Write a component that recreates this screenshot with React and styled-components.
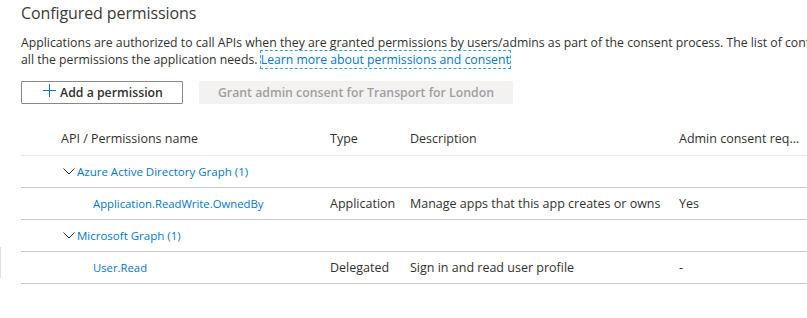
import React from 'react';
import styled, { createGlobalStyle } from 'styled-components';

const GlobalStyle = createGlobalStyle`
  html, body {
    margin: 0;
    padding: 0;
    background: #ffffff;
    overflow: hidden;
  }
  body {
    font-family: "Segoe UI", "Open Sans", "Noto Sans", sans-serif;
    color: #323130;
    font-size: 12.5px;
  }
`;

const Page = styled.div`
  width: 1200px;
  padding: 1px 0 0 21px;
  position: relative;
`;

const EdgeMark = styled.div`
  position: absolute;
  left: 0;
  top: 247px;
  width: 1px;
  height: 31px;
  background: #e1dfdd;
`;

const Title = styled.h2`
  margin: 0;
  font-size: 16px;
  font-weight: 400;
  letter-spacing: -0.1px;
  line-height: 24px;
  color: #3b3a39;
`;

const Intro = styled.p`
  margin: 9px 0 0;
  line-height: 17px;
  font-size: 12.25px;
  white-space: nowrap;
`;

const LearnLink = styled.a`
  color: #0078d4;
  text-decoration: none;
  outline: 1px dashed #35a0e0;
  outline-offset: 0;
`;

const Toolbar = styled.div`
  display: flex;
  gap: 16px;
  margin-top: 13px;
`;

const Button = styled.button`
  display: flex;
  align-items: center;
  justify-content: ${p => (p.$disabled ? 'center' : 'flex-start')};
  gap: 4px;
  height: 23px;
  padding: 0 0 0 ${p => (p.$disabled ? '0' : '21px')};
  font-family: inherit;
  font-size: 12.3px;
  font-weight: 600;
  white-space: nowrap;
  border: 1px solid ${p => (p.$disabled ? '#f3f2f1' : '#8a8886')};
  background: ${p => (p.$disabled ? '#f3f2f1' : '#ffffff')};
  color: ${p => (p.$disabled ? '#a19f9d' : '#323130')};
  border-radius: 1px;
  cursor: ${p => (p.$disabled ? 'default' : 'pointer')};
  width: ${p => p.$width}px;
`;

const PlusIcon = () => (
  <svg width="13" height="13" viewBox="0 0 13 13" style={{ marginTop: -4 }}>
    <path d="M6.5 0 V13 M0 6.5 H13" stroke="#0078d4" strokeWidth="1" fill="none" />
  </svg>
);

const Chevron = () => (
  <svg width="12" height="7" viewBox="0 0 12 7">
    <path d="M0.5 0.5 L6 6 L11.5 0.5" stroke="#323130" strokeWidth="1" fill="none" />
  </svg>
);

const Table = styled.div`
  margin-top: 17px;
`;

const Row = styled.div`
  display: grid;
  grid-template-columns: 40px 269px 80px 269px 1fr;
  align-items: center;
  height: ${p => (p.$header ? '34px' : '31px')};
  border-bottom: 1px solid ${p => (p.$header ? '#edebe9' : '#c8c6c4')};
`;

const HeadCell = styled.div`
  color: #323130;
  white-space: nowrap;
  overflow: hidden;
  text-overflow: ellipsis;
`;

const AdminCell = styled(HeadCell)`
  width: 126px;
`;

const Cell = styled.div`
  white-space: nowrap;
  color: #323130;
`;

const GroupCell = styled.div`
  grid-column: 1 / -1;
  display: flex;
  align-items: center;
  gap: 2px;
  padding-left: 42px;
  font-size: 11.5px;
  color: #0078d4;
  svg {
    margin-top: -1px;
  }
`;

const PermLink = styled.a`
  color: #0078d4;
  font-size: 11.3px;
  text-decoration: none;
  padding-left: 32px;
  white-space: nowrap;
`;

const groups = [
  {
    name: 'Azure Active Directory Graph (1)',
    items: [
      {
        name: 'Application.ReadWrite.OwnedBy',
        type: 'Application',
        description: 'Manage apps that this app creates or owns',
        admin: 'Yes',
      },
    ],
  },
  {
    name: 'Microsoft Graph (1)',
    items: [
      {
        name: 'User.Read',
        type: 'Delegated',
        description: 'Sign in and read user profile',
        admin: '-',
      },
    ],
  },
];

const App = () => (
  <>
    <GlobalStyle />
    <Page>
      <EdgeMark />
      <Title>Configured permissions</Title>
      <Intro>
        Applications are authorized to call APIs when they are granted permissions by users/admins as part of the consent process. The list of configured permissions should include
        <br />
        all the permissions the application needs.{' '}
        <LearnLink href="#">Learn more about permissions and consent</LearnLink>
      </Intro>
      <Toolbar>
        <Button $width={162}>
          <PlusIcon />
          Add a permission
        </Button>
        <Button $disabled $width={314}>Grant admin consent for Transport for London</Button>
      </Toolbar>
      <Table>
        <Row $header>
          <span />
          <HeadCell>API / Permissions name</HeadCell>
          <HeadCell>Type</HeadCell>
          <HeadCell>Description</HeadCell>
          <AdminCell>Admin consent required</AdminCell>
        </Row>
        {groups.map(g => (
          <React.Fragment key={g.name}>
            <Row>
              <GroupCell>
                <Chevron />
                {g.name}
              </GroupCell>
            </Row>
            {g.items.map(it => (
              <Row key={it.name}>
                <span />
                <PermLink href="#">{it.name}</PermLink>
                <Cell>{it.type}</Cell>
                <Cell>{it.description}</Cell>
                <Cell>{it.admin}</Cell>
              </Row>
            ))}
          </React.Fragment>
        ))}
      </Table>
    </Page>
  </>
);

export default App;
